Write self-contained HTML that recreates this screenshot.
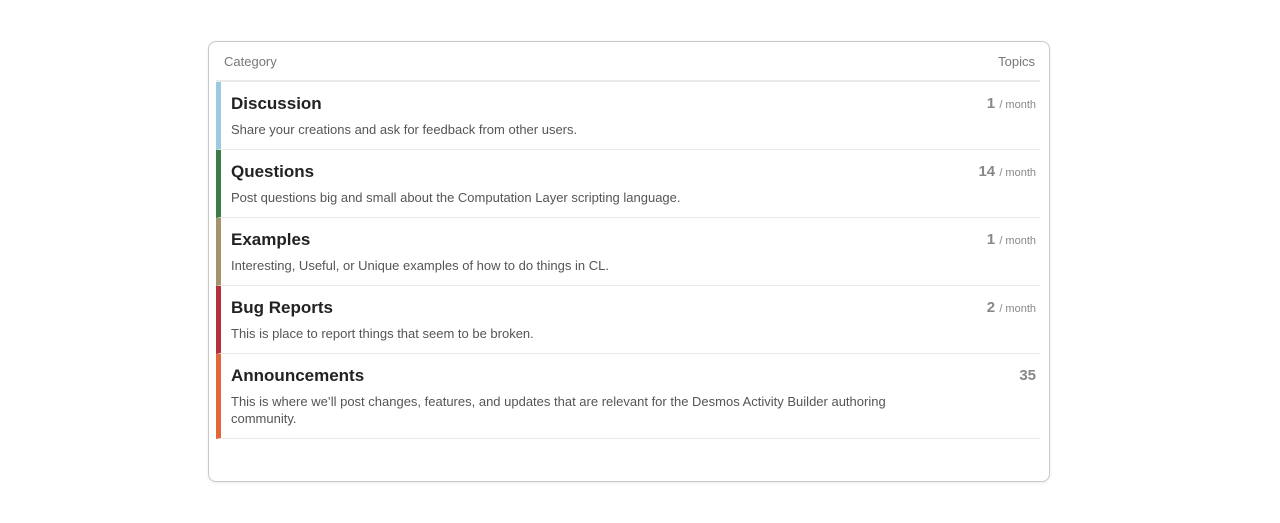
<!DOCTYPE html>
<html><head><style>
body{margin:0;background:#fff;font-family:"Liberation Sans",Arial,sans-serif;}
.card{position:absolute;left:208px;top:41px;width:842px;height:441px;border:1px solid #c8c8c8;border-radius:8px;box-shadow:0 1px 3px rgba(0,0,0,.08);box-sizing:border-box;}
.hdr{position:absolute;left:7px;right:9px;top:0;height:38px;border-bottom:2px solid #e9e9e9;font-size:13px;color:#777;}
.hdr .l{position:absolute;left:8px;top:12px}
.hdr .r{position:absolute;right:5px;top:12px}
.row{position:absolute;left:7px;right:9px;border-bottom:1px solid #e9e9e9;border-left:5px solid;}
.t{position:absolute;left:10px;top:12px;font-size:17px;font-weight:bold;color:#222}
.d{position:absolute;left:10px;top:39px;font-size:13px;color:#555;line-height:17px;width:680px}
.n{position:absolute;right:4px;top:13px;font-size:15px;font-weight:bold;color:#888}
.n span{font-size:11px;font-weight:normal;color:#888}
</style></head><body>
<div class="card">
<div class="hdr"><span class="l">Category</span><span class="r">Topics</span></div>
<div class="row" style="top:40px;height:67px;border-left-color:#9cc8e0"><div class="t">Discussion</div><div class="d">Share your creations and ask for feedback from other users.</div><div class="n">1 <span>/ month</span></div></div>
<div class="row" style="top:108px;height:67px;border-left-color:#3b7b47"><div class="t">Questions</div><div class="d">Post questions big and small about the Computation Layer scripting language.</div><div class="n">14 <span>/ month</span></div></div>
<div class="row" style="top:176px;height:67px;border-left-color:#a4936d"><div class="t">Examples</div><div class="d">Interesting, Useful, or Unique examples of how to do things in CL.</div><div class="n">1 <span>/ month</span></div></div>
<div class="row" style="top:244px;height:67px;border-left-color:#b3303b"><div class="t">Bug Reports</div><div class="d">This is place to report things that seem to be broken.</div><div class="n">2 <span>/ month</span></div></div>
<div class="row" style="top:312px;height:84px;border-left-color:#e2653b"><div class="t">Announcements</div><div class="d">This is where we’ll post changes, features, and updates that are relevant for the Desmos Activity Builder authoring community.</div><div class="n">35</div></div>
</div>
</body></html>
